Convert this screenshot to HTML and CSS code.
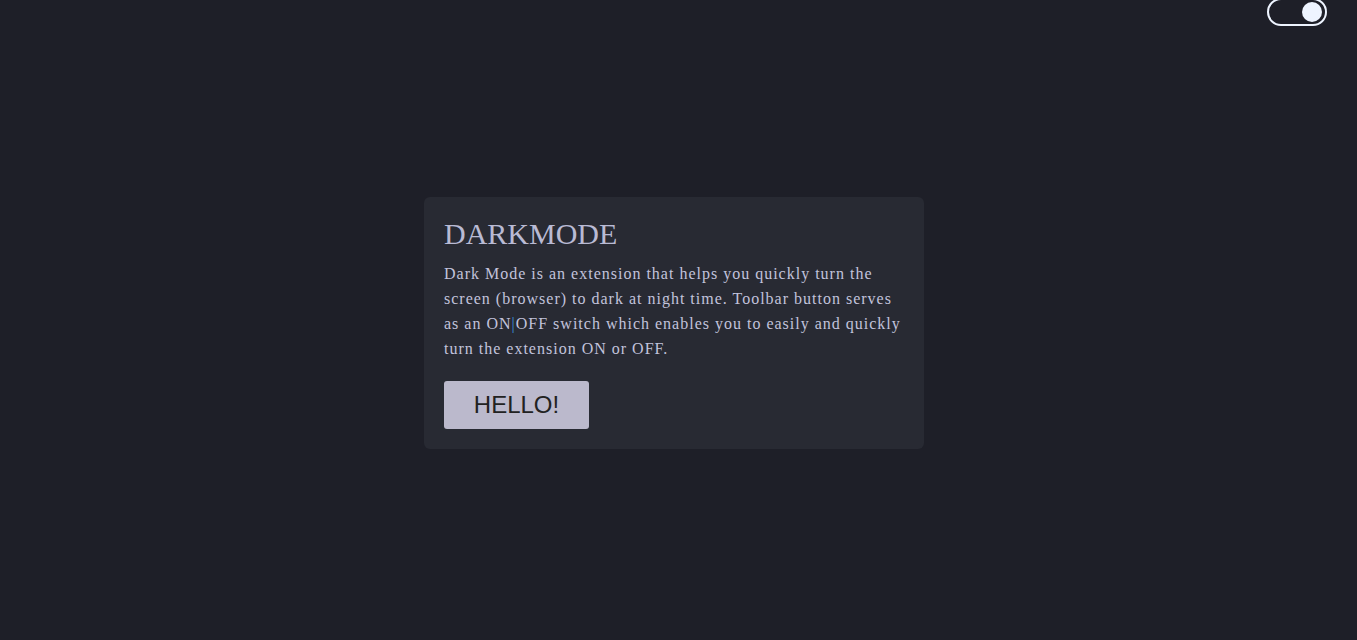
FILE: index.html
```html
<!DOCTYPE html>
<html lang="en">
<head>
    <meta charset="UTF-8">
    <meta name="viewport" content="width=device-width, initial-scale=1.0">
    <title>Dark Mode</title>
    <link rel="stylesheet" href="styles.css">
</head>
<body>
    <label class="switch">
        <span class="knob"></span>
    </label>

    <div class="card">
        <h1>DARKMODE</h1>
        <p>Dark Mode is an extension that helps you quickly turn the screen (browser) to dark at night time. Toolbar button serves as an ON<span class="bar">|</span>OFF switch which enables you to easily and quickly turn the extension ON or OFF.</p>
        <button class="hello">HELLO!</button>
    </div>
</body>
</html>
```

FILE: styles.css
```css
body {
    margin: 0;
    padding: 0;
    height: 100vh;
    background-color: #1e1f28;
    font-family: 'Liberation Serif', 'Times New Roman', serif;
    display: flex;
    justify-content: center;
    align-items: center;
}

.switch {
    position: absolute;
    top: -2px;
    right: 30px;
    width: 56px;
    height: 24px;
    border: 2px solid #eef4ff;
    border-radius: 16px;
    cursor: pointer;
}

.knob {
    position: absolute;
    top: 2px;
    right: 3px;
    width: 20px;
    height: 20px;
    border-radius: 50%;
    background-color: #eef4ff;
}

.card {
    width: 460px;
    padding: 20px;
    margin: 6px 9px 0 0;
    background-color: #282a33;
    border-radius: 6px;
}

h1 {
    margin: 0 0 10px;
    font-size: 30px;
    font-weight: normal;
    color: #b9bad4;
}

p {
    margin: 0 0 20px;
    font-size: 16px;
    line-height: 25px;
    letter-spacing: 1px;
    color: #c2c3dc;
}

.bar {
    color: #3a8fd8;
}

.hello {
    width: 145px;
    height: 48px;
    border: none;
    border-radius: 3px;
    background-color: #bbb9cc;
    color: #222;
    font-family: 'Liberation Sans', Arial, sans-serif;
    font-size: 24px;
    cursor: pointer;
}
```
